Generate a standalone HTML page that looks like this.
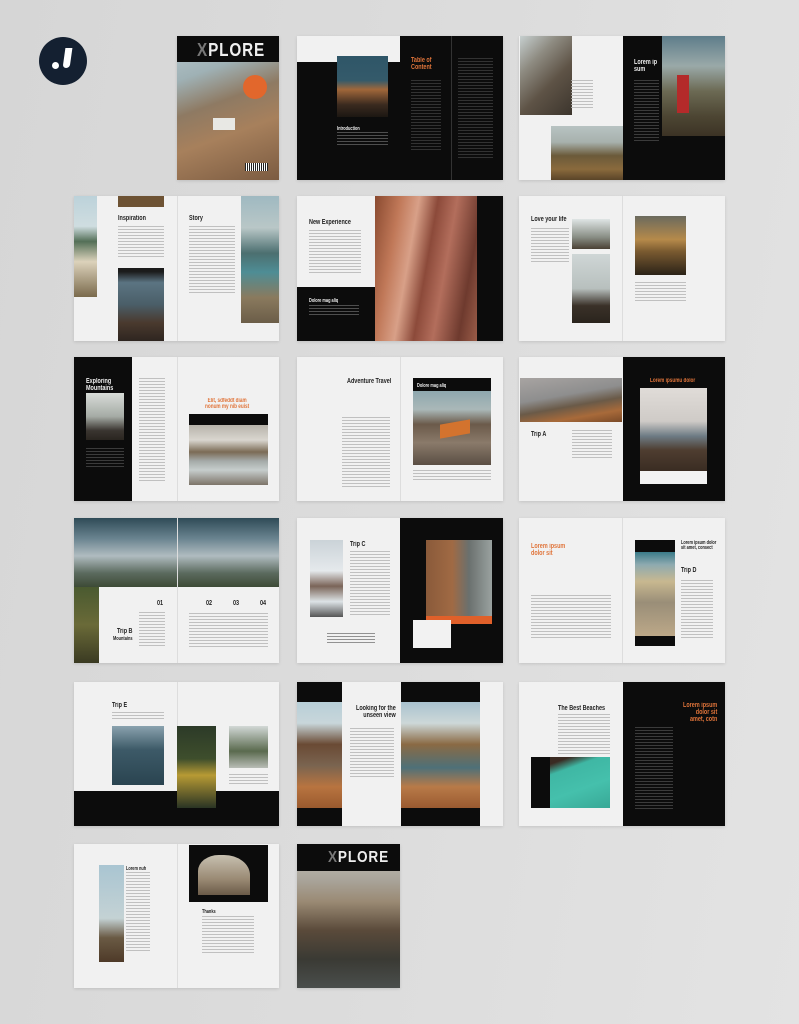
<!DOCTYPE html>
<html><head><meta charset="utf-8"><style>
*{margin:0;padding:0;box-sizing:border-box}
body{width:799px;height:1024px;overflow:hidden;position:relative;background:linear-gradient(100deg,#d6d6d6 0%,#dcdcdc 50%,#e3e3e3 100%);font-family:"Liberation Sans",sans-serif}
.a{position:absolute}
.w{background:#f1f1f1}
.k{background:#0c0c0c}
.t{background:repeating-linear-gradient(#b4b4b4 0 1px,transparent 1px 3px);opacity:.8}
.tl{background:repeating-linear-gradient(#6a6a6a 0 1px,transparent 1px 3px);opacity:.7}
.h{font-family:"Liberation Sans Narrow","Liberation Sans",sans-serif;font-weight:bold;color:#222;font-size:8px;line-height:8px;white-space:nowrap;transform:scaleX(.78);transform-origin:left top}
.hr{transform-origin:right top}
.o{color:#e0743a}
.wt{color:#eee}
.sp{box-shadow:0 1px 3px rgba(0,0,0,.12)}
</style></head><body>
<div class="a" style="left:39px;top:37px;width:48px;height:48px;border-radius:50%;background:#142031"></div>
<div class="a" style="left:52px;top:62px;width:7px;height:7px;border-radius:50%;background:#fff"></div>
<div class="a" style="left:64px;top:48px;width:7px;height:20px;background:#fff;border-radius:0 0 4px 4px;transform:skewX(-8deg)"></div>

<!-- ROW 1 -->
<div class="a sp" style="left:177px;top:36px;width:102px;height:144px;background:linear-gradient(160deg,#b9c9cf 0%,#9fb1b5 25%,#8e7a63 45%,#a7805c 65%,#7b5b41 100%)"></div>
<div class="a k" style="left:177px;top:36px;width:102px;height:26px"></div>
<div class="a h wt" style="left:197px;top:41px;font-size:18px;line-height:18px;letter-spacing:1px;transform:scaleX(.85)"><span style="color:#777">X</span>PLORE</div>
<div class="a" style="left:243px;top:75px;width:24px;height:24px;border-radius:50%;background:#e2672c"></div>
<div class="a" style="left:245px;top:163px;width:23px;height:8px;background:repeating-linear-gradient(90deg,#222 0 1px,#fff 1px 2px)"></div>
<div class="a" style="left:213px;top:118px;width:22px;height:12px;background:#e8e8e4"></div>

<div class="a sp k" style="left:297px;top:36px;width:206px;height:144px"></div>
<div class="a w" style="left:297px;top:36px;width:103px;height:26px"></div>
<div class="a" style="left:337px;top:56px;width:51px;height:61px;background:linear-gradient(#2f5668 0%,#345a6a 40%,#a0673a 55%,#3a2a1f 80%,#1c1712 100%)"></div>
<div class="a h wt" style="left:337px;top:125px;font-size:5px">Introduction</div>
<div class="a tl" style="left:337px;top:132px;width:51px;height:14px"></div>
<div class="a" style="left:451px;top:36px;width:1px;height:144px;background:#333"></div>
<div class="a h o" style="left:411px;top:57px;font-size:7px;line-height:7px">Table of<br>Content</div>
<div class="a tl" style="left:411px;top:80px;width:30px;height:70px;opacity:.4"></div>
<div class="a tl" style="left:458px;top:58px;width:35px;height:100px;opacity:.4"></div>

<div class="a sp w" style="left:519px;top:36px;width:206px;height:144px"></div>
<div class="a" style="left:520px;top:36px;width:52px;height:79px;background:linear-gradient(135deg,#c6cfcf 0%,#8d8a80 30%,#5e5346 60%,#3c352d 100%)"></div>
<div class="a" style="left:551px;top:126px;width:72px;height:54px;background:linear-gradient(#b8c3c2 0%,#a7b1ad 30%,#6b5a3a 55%,#8a6a3d 80%,#5a4428 100%)"></div>
<div class="a t" style="left:571px;top:80px;width:22px;height:30px"></div>
<div class="a k" style="left:623px;top:36px;width:102px;height:144px"></div>
<div class="a" style="left:662px;top:36px;width:63px;height:100px;background:linear-gradient(#5e7d8a 0%,#9aa9a8 30%,#6c6a54 55%,#4d4633 80%,#3c3325 100%)"></div>
<div class="a" style="left:677px;top:75px;width:12px;height:38px;background:#b42a2a"></div>
<div class="a h wt" style="left:634px;top:59px;font-size:7px;line-height:7px">Lorem ip<br>sum</div>
<div class="a tl" style="left:634px;top:80px;width:25px;height:62px;opacity:.5"></div>

<!-- ROW 2 -->
<div class="a sp w" style="left:74px;top:196px;width:205px;height:145px"></div>
<div class="a" style="left:74px;top:196px;width:23px;height:101px;background:linear-gradient(#bcd2da 0%,#cfdde0 30%,#536f57 45%,#dcd2bb 65%,#7a6a4c 100%)"></div>
<div class="a" style="left:118px;top:196px;width:46px;height:11px;background:#6e5334"></div>
<div class="a h" style="left:118px;top:215px;font-size:7px">Inspiration</div>
<div class="a t" style="left:118px;top:226px;width:46px;height:32px"></div>
<div class="a" style="left:118px;top:268px;width:46px;height:73px;background:linear-gradient(#1b1b1b 0 5%,#5b7482 20%,#4a5e68 50%,#4a3a2e 75%,#2e2520 100%)"></div>
<div class="a" style="left:177px;top:196px;width:1px;height:145px;background:#ddd"></div>
<div class="a h" style="left:189px;top:215px;font-size:7px">Story</div>
<div class="a t" style="left:189px;top:226px;width:46px;height:68px"></div>
<div class="a" style="left:241px;top:196px;width:38px;height:127px;background:linear-gradient(#9fb9c1 0%,#b9c7c7 25%,#4c6f70 45%,#4e8d95 60%,#8a7a5e 80%,#6b5d48 100%)"></div>

<div class="a sp w" style="left:297px;top:196px;width:206px;height:145px"></div>
<div class="a h" style="left:309px;top:219px;font-size:7px">New Experience</div>
<div class="a t" style="left:309px;top:230px;width:52px;height:45px"></div>
<div class="a k" style="left:297px;top:287px;width:78px;height:54px"></div>
<div class="a h wt" style="left:309px;top:297px;font-size:5px">Dolore mag aliq</div>
<div class="a tl" style="left:309px;top:305px;width:50px;height:10px"></div>
<div class="a" style="left:375px;top:196px;width:102px;height:145px;background:linear-gradient(100deg,#8a4a30 0%,#c07858 20%,#d8a088 35%,#8c4a3a 50%,#b36e5c 65%,#6e3a2e 85%,#9a5c48 100%)"></div>
<div class="a k" style="left:477px;top:196px;width:26px;height:145px"></div>

<div class="a sp w" style="left:519px;top:196px;width:206px;height:145px"></div>
<div class="a" style="left:622px;top:196px;width:1px;height:145px;background:#ddd"></div>
<div class="a h" style="left:531px;top:216px;font-size:7px">Love your life</div>
<div class="a t" style="left:531px;top:228px;width:38px;height:35px"></div>
<div class="a" style="left:572px;top:219px;width:38px;height:30px;background:linear-gradient(#dfe5e5,#8a8f86 60%,#4a4034)"></div>
<div class="a" style="left:572px;top:254px;width:38px;height:69px;background:linear-gradient(#cfd6d6 0%,#b8c0be 50%,#3a3128 75%,#2a241d 100%)"></div>
<div class="a" style="left:635px;top:216px;width:51px;height:59px;background:linear-gradient(#6b6a5e 0%,#b68a4a 40%,#7a5a30 60%,#2b2318 100%)"></div>
<div class="a t" style="left:635px;top:282px;width:51px;height:20px"></div>

<!-- ROW 3 -->
<div class="a sp w" style="left:74px;top:357px;width:205px;height:144px"></div>
<div class="a k" style="left:74px;top:357px;width:58px;height:144px"></div>
<div class="a h wt" style="left:86px;top:378px;font-size:7px;line-height:7px">Exploring<br>Mountains</div>
<div class="a" style="left:86px;top:393px;width:38px;height:47px;background:linear-gradient(#d8dcd8,#a5aba5 50%,#3a3530 80%,#2a2520)"></div>
<div class="a tl" style="left:86px;top:448px;width:38px;height:20px;opacity:.5"></div>
<div class="a t" style="left:139px;top:378px;width:26px;height:105px"></div>
<div class="a" style="left:177px;top:357px;width:1px;height:144px;background:#ddd"></div>
<div class="a h o" style="left:205px;top:398px;font-size:6px;line-height:6px;text-align:center">Elit, sdfeddt diam<br>nonum my nib euist</div>
<div class="a k" style="left:189px;top:414px;width:79px;height:11px"></div>
<div class="a" style="left:189px;top:425px;width:79px;height:60px;background:linear-gradient(#b7b3ab 0%,#d9d6cf 25%,#7b6b55 45%,#a4aaa8 60%,#c6cdcc 75%,#7d7468 100%)"></div>

<div class="a sp w" style="left:297px;top:357px;width:206px;height:144px"></div>
<div class="a" style="left:400px;top:357px;width:1px;height:144px;background:#ddd"></div>
<div class="a h" style="left:347px;top:378px;font-size:7px">Adventure Travel</div>
<div class="a t" style="left:342px;top:417px;width:48px;height:70px"></div>
<div class="a k" style="left:413px;top:378px;width:78px;height:13px"></div>
<div class="a h wt" style="left:417px;top:382px;font-size:5px">Dolore mag aliq</div>
<div class="a" style="left:413px;top:391px;width:78px;height:74px;background:linear-gradient(#8ea7ae 0%,#aab8b8 25%,#6b5a4a 45%,#8a7a6a 70%,#5a4e44 100%)"></div>
<div class="a" style="left:440px;top:422px;width:30px;height:14px;background:#d3732e;transform:skewY(-10deg)"></div>
<div class="a t" style="left:413px;top:470px;width:78px;height:12px"></div>

<div class="a sp w" style="left:519px;top:357px;width:206px;height:144px"></div>
<div class="a" style="left:520px;top:378px;width:102px;height:44px;background:linear-gradient(170deg,#a8a4a2 0%,#8e8e8e 40%,#6a5a48 60%,#a86a3a 80%,#7a4a28 100%)"></div>
<div class="a h" style="left:531px;top:431px;font-size:7px">Trip A</div>
<div class="a t" style="left:572px;top:430px;width:40px;height:30px"></div>
<div class="a k" style="left:623px;top:357px;width:102px;height:144px"></div>
<div class="a h o" style="left:650px;top:378px;font-size:6px;line-height:6px">Lorem ipsumu dolor</div>
<div class="a" style="left:640px;top:388px;width:67px;height:96px;background:#f2f2f2"></div>
<div class="a" style="left:640px;top:388px;width:67px;height:83px;background:linear-gradient(#e0dcd8 0%,#cfcbc7 40%,#6d7b84 58%,#4e3d30 75%,#3a2c22 100%)"></div>

<!-- ROW 4 -->
<div class="a sp w" style="left:74px;top:518px;width:205px;height:145px"></div>
<div class="a" style="left:74px;top:518px;width:205px;height:69px;background:linear-gradient(#2f4b57 0%,#6a8490 30%,#b0bcc0 55%,#5b6a5e 80%,#3d4a36 100%)"></div>
<div class="a" style="left:74px;top:587px;width:25px;height:76px;background:linear-gradient(#4a5a30,#6a6a38 50%,#3a3a22)"></div>
<div class="a" style="left:177px;top:518px;width:1px;height:145px;background:#ddd"></div>
<div class="a h" style="left:113px;top:628px;font-size:7px;line-height:7px;text-align:right">Trip B<br><span style="font-size:5px">Mountains</span></div>
<div class="a h" style="left:157px;top:600px;font-size:7px">01</div>
<div class="a t" style="left:139px;top:612px;width:26px;height:34px"></div>
<div class="a h" style="left:206px;top:600px;font-size:7px">02</div>
<div class="a h" style="left:233px;top:600px;font-size:7px">03</div>
<div class="a h" style="left:260px;top:600px;font-size:7px">04</div>
<div class="a t" style="left:189px;top:613px;width:79px;height:34px"></div>

<div class="a sp w" style="left:297px;top:518px;width:206px;height:145px"></div>
<div class="a" style="left:310px;top:540px;width:33px;height:77px;background:linear-gradient(#cbd3d8,#e5e9ec 40%,#7a6458 60%,#dde3e6 80%,#555 100%)"></div>
<div class="a h" style="left:350px;top:541px;font-size:7px">Trip C</div>
<div class="a t" style="left:350px;top:551px;width:40px;height:65px"></div>
<div class="a tl" style="left:327px;top:633px;width:48px;height:12px"></div>
<div class="a k" style="left:400px;top:518px;width:103px;height:145px"></div>
<div class="a" style="left:426px;top:540px;width:66px;height:77px;background:linear-gradient(90deg,#8a5a3a 0%,#a06a44 40%,#6a706e 65%,#9aa2a0 100%)"></div>
<div class="a" style="left:426px;top:616px;width:66px;height:8px;background:#e0602a"></div>
<div class="a" style="left:413px;top:620px;width:38px;height:28px;background:#f2f2f2"></div>

<div class="a sp w" style="left:519px;top:518px;width:206px;height:145px"></div>
<div class="a" style="left:622px;top:518px;width:1px;height:145px;background:#ddd"></div>
<div class="a h o" style="left:531px;top:543px;font-size:7px;line-height:7px">Lorem ipsum<br>dolor sit</div>
<div class="a t" style="left:531px;top:595px;width:80px;height:45px"></div>
<div class="a k" style="left:635px;top:540px;width:40px;height:106px"></div>
<div class="a" style="left:635px;top:552px;width:40px;height:84px;background:linear-gradient(#3a7a88 0%,#8eaab0 15%,#c8b890 35%,#9a8e78 60%,#bca888 100%)"></div>
<div class="a h" style="left:681px;top:541px;font-size:5px;line-height:5px">Lorem ipsum dolor<br>sit amet, consect</div>
<div class="a h" style="left:681px;top:567px;font-size:7px">Trip D</div>
<div class="a t" style="left:681px;top:580px;width:32px;height:60px"></div>

<!-- ROW 5 -->
<div class="a sp w" style="left:74px;top:682px;width:205px;height:144px"></div>
<div class="a k" style="left:74px;top:791px;width:205px;height:35px"></div>
<div class="a" style="left:177px;top:682px;width:1px;height:109px;background:#ddd"></div>
<div class="a h" style="left:112px;top:702px;font-size:7px">Trip E</div>
<div class="a t" style="left:112px;top:712px;width:52px;height:9px"></div>
<div class="a" style="left:112px;top:726px;width:52px;height:59px;background:linear-gradient(#8aa2ae 0%,#3d5a68 40%,#2a4450 100%)"></div>
<div class="a" style="left:177px;top:726px;width:39px;height:82px;background:linear-gradient(#2c3a28 0%,#3e4e2c 40%,#b79a34 60%,#2a3424 100%)"></div>
<div class="a" style="left:229px;top:726px;width:39px;height:42px;background:linear-gradient(#d2d8d6,#5a6a4e 60%,#b8bcb6)"></div>
<div class="a t" style="left:229px;top:774px;width:39px;height:10px"></div>

<div class="a sp w" style="left:297px;top:682px;width:206px;height:144px"></div>
<div class="a k" style="left:297px;top:682px;width:45px;height:144px"></div>
<div class="a k" style="left:401px;top:682px;width:79px;height:144px"></div>
<div class="a" style="left:297px;top:702px;width:45px;height:106px;background:linear-gradient(#b8cfd8 0%,#c8d6da 20%,#6a4a34 40%,#7a6450 60%,#b87440 80%,#9a5a2e 100%)"></div>
<div class="a" style="left:401px;top:702px;width:79px;height:106px;background:linear-gradient(#a9c2cf 0%,#cdd8d8 20%,#8a6a44 40%,#4e7078 62%,#b87a48 80%,#9a5a30 100%)"></div>
<div class="a h" style="left:356px;top:705px;font-size:7px;line-height:7px;text-align:right">Looking for the<br>&nbsp;&nbsp;&nbsp;&nbsp;unseen view</div>
<div class="a t" style="left:350px;top:728px;width:44px;height:50px"></div>

<div class="a sp w" style="left:519px;top:682px;width:206px;height:144px"></div>
<div class="a h" style="left:558px;top:705px;font-size:7px">The Best Beaches</div>
<div class="a t" style="left:558px;top:714px;width:52px;height:40px"></div>
<div class="a k" style="left:531px;top:757px;width:19px;height:51px"></div>
<div class="a" style="left:550px;top:757px;width:60px;height:51px;background:linear-gradient(160deg,#3a2a22 0 10%,#3fb7a4 25%,#45c0ac 60%,#38a896 100%)"></div>
<div class="a k" style="left:623px;top:682px;width:102px;height:144px"></div>
<div class="a h o" style="left:683px;top:702px;font-size:7px;line-height:7px;text-align:right">Lorem ipsum<br>dolor sit<br>amet, cotn</div>
<div class="a tl" style="left:635px;top:727px;width:38px;height:82px;opacity:.5"></div>

<!-- ROW 6 -->
<div class="a sp w" style="left:74px;top:844px;width:205px;height:144px"></div>
<div class="a" style="left:177px;top:844px;width:1px;height:144px;background:#ddd"></div>
<div class="a" style="left:99px;top:865px;width:25px;height:97px;background:linear-gradient(#a9c5d2 0%,#c4d2d4 55%,#6a5a44 75%,#4e3a28 100%)"></div>
<div class="a h" style="left:126px;top:865px;font-size:5px">Lorem nuh</div>
<div class="a t" style="left:126px;top:872px;width:24px;height:80px"></div>
<div class="a k" style="left:189px;top:845px;width:79px;height:57px"></div>
<div class="a" style="left:198px;top:855px;width:52px;height:40px;border-radius:40% 50% 0 0;background:linear-gradient(#c7c0b0,#9a8a74 60%,#6a5a48)"></div>
<div class="a h" style="left:202px;top:908px;font-size:5px">Thanks</div>
<div class="a t" style="left:202px;top:916px;width:52px;height:38px"></div>

<div class="a sp" style="left:297px;top:844px;width:103px;height:144px;background:linear-gradient(#c6c4bc 0%,#a9a49a 25%,#9a8a74 40%,#5a4a3a 60%,#3a3a34 80%,#4a4e4c 100%)"></div>
<div class="a k" style="left:297px;top:844px;width:103px;height:27px"></div>
<div class="a h wt" style="left:328px;top:850px;font-size:16px;line-height:16px;letter-spacing:1px;transform:scaleX(.85)"><span style="color:#777">X</span>PLORE</div>
</body></html>
